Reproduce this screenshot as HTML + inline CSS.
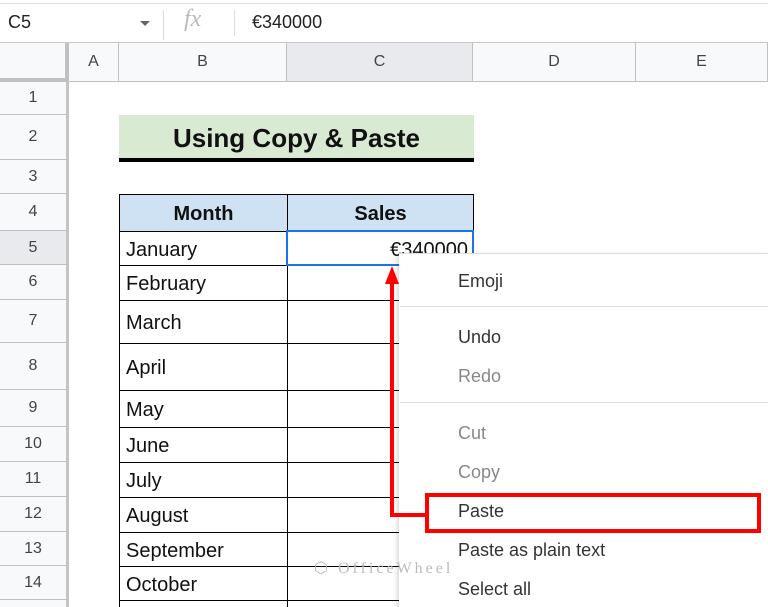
<!DOCTYPE html><html><head><style>
*{margin:0;padding:0;box-sizing:border-box}
html,body{width:768px;height:607px;overflow:hidden}
body{background:#fff;font-family:"Liberation Sans",Arial,sans-serif;position:relative}
.a{position:absolute}
.rh{position:absolute;left:0;width:69px;background:#f8f9fa;border-bottom:1px solid #c0c0c0;border-right:3px solid #c4c4c4;color:#444;font-size:16px;display:flex;align-items:center;justify-content:center}
.ch{position:absolute;top:43px;height:39px;background:#f8f9fa;border-right:1px solid #c0c0c0;border-bottom:1px solid #c0c0c0;color:#444;font-size:16px;display:flex;align-items:center;justify-content:center}
.cell{position:absolute;border:1px solid #000;font-size:20px;color:#111;display:flex;align-items:center;padding-left:6px;padding-top:3px}
.mi{position:absolute;left:458px;font-size:18px;color:#333}
.g{color:#888}
</style></head><body>
<div class="a" style="left:0;top:0;width:768px;height:4px;background:#fff;border-bottom:1px solid #ddd"></div>
<div class="a" style="left:8px;top:12px;font-size:18px;color:#222">C5</div>
<div class="a" style="left:140px;top:21px;width:0;height:0;border-left:5px solid transparent;border-right:5px solid transparent;border-top:5px solid #666"></div>
<div class="a" style="left:163px;top:10px;width:1px;height:30px;background:#ddd"></div>
<div class="a" style="left:184px;top:6px;font-size:24px;color:#bbb;font-family:'Liberation Serif',serif;font-style:italic">fx</div>
<div class="a" style="left:234px;top:10px;width:1px;height:26px;background:#ddd"></div>
<div class="a" style="left:252px;top:12px;font-size:18px;color:#222">€340000</div>
<div class="a" style="left:0;top:42px;width:768px;height:1px;background:#c8c8c8"></div>
<div class="a" style="left:0;top:43px;width:69px;height:39px;background:#f8f9fa;border-right:4px solid #c0c0c0;border-bottom:4px solid #c0c0c0"></div>
<div class="ch" style="left:69px;width:50px">A</div>
<div class="ch" style="left:119px;width:168px">B</div>
<div class="ch" style="left:287px;width:186px;background:#e8eaed">C</div>
<div class="ch" style="left:473px;width:163px">D</div>
<div class="ch" style="left:636px;width:132px">E</div>
<div class="rh" style="top:82px;height:33px">1</div>
<div class="rh" style="top:115px;height:45px">2</div>
<div class="rh" style="top:160px;height:34px">3</div>
<div class="rh" style="top:194px;height:37px">4</div>
<div class="rh" style="top:231px;height:34px;background:#e8eaed">5</div>
<div class="rh" style="top:265px;height:35px">6</div>
<div class="rh" style="top:300px;height:43px">7</div>
<div class="rh" style="top:343px;height:47px">8</div>
<div class="rh" style="top:390px;height:37px">9</div>
<div class="rh" style="top:427px;height:35px">10</div>
<div class="rh" style="top:462px;height:35px">11</div>
<div class="rh" style="top:497px;height:35px">12</div>
<div class="rh" style="top:532px;height:34px">13</div>
<div class="rh" style="top:566px;height:34px">14</div>
<div class="rh" style="top:600px;height:10px"></div>
<div class="a" style="left:119px;top:115px;width:355px;height:47px;background:#d9ead3;border-bottom:4px solid #000;font-weight:bold;font-size:26px;text-align:center;line-height:46px;color:#111">Using Copy &amp; Paste</div>
<div class="cell" style="left:119px;top:194px;width:169px;height:38px;background:#cfe2f3;justify-content:center;font-weight:bold;padding:3px 0 0">Month</div>
<div class="cell" style="left:287px;top:194px;width:187px;height:38px;background:#cfe2f3;justify-content:center;font-weight:bold;padding:3px 0 0">Sales</div>
<div class="cell" style="left:119px;top:231px;width:169px;height:35px">January</div>
<div class="cell" style="left:119px;top:265px;width:169px;height:36px">February</div>
<div class="cell" style="left:119px;top:300px;width:169px;height:44px">March</div>
<div class="cell" style="left:119px;top:343px;width:169px;height:48px">April</div>
<div class="cell" style="left:119px;top:390px;width:169px;height:38px">May</div>
<div class="cell" style="left:119px;top:427px;width:169px;height:36px">June</div>
<div class="cell" style="left:119px;top:462px;width:169px;height:36px">July</div>
<div class="cell" style="left:119px;top:497px;width:169px;height:36px">August</div>
<div class="cell" style="left:119px;top:532px;width:169px;height:35px">September</div>
<div class="cell" style="left:119px;top:566px;width:169px;height:35px">October</div>
<div class="cell" style="left:119px;top:600px;width:169px;height:20px"></div>
<div class="cell" style="left:287px;top:265px;width:187px;height:36px"></div>
<div class="cell" style="left:287px;top:300px;width:187px;height:44px"></div>
<div class="cell" style="left:287px;top:343px;width:187px;height:48px"></div>
<div class="cell" style="left:287px;top:390px;width:187px;height:38px"></div>
<div class="cell" style="left:287px;top:427px;width:187px;height:36px"></div>
<div class="cell" style="left:287px;top:462px;width:187px;height:36px"></div>
<div class="cell" style="left:287px;top:497px;width:187px;height:36px"></div>
<div class="cell" style="left:287px;top:532px;width:187px;height:35px"></div>
<div class="cell" style="left:287px;top:566px;width:187px;height:35px"></div>
<div class="cell" style="left:287px;top:600px;width:187px;height:20px"></div>
<div class="a" style="left:286px;top:230px;width:188px;height:36px;border:2px solid #1a73e8;background:#fff;font-size:20px;text-align:right;padding-right:4px;line-height:36px;color:#111">€340000</div>
<div class="a" style="left:399px;top:253px;width:369px;height:360px;background:#fff;border-top:1px solid #ddd;box-shadow:-2px 2px 4px rgba(0,0,0,0.15)"></div>
<div class="a" style="left:400px;top:306px;width:368px;height:1px;background:#ddd"></div>
<div class="a" style="left:400px;top:402px;width:368px;height:1px;background:#ddd"></div>
<div class="mi" style="top:271px">Emoji</div>
<div class="mi" style="top:327px">Undo</div>
<div class="mi g" style="top:366px">Redo</div>
<div class="mi g" style="top:423px">Cut</div>
<div class="mi g" style="top:462px">Copy</div>
<div class="mi" style="top:501px">Paste</div>
<div class="mi" style="top:540px">Paste as plain text</div>
<div class="mi" style="top:579px">Select all</div>
<div class="a" style="left:425px;top:493px;width:336px;height:40px;border:4px solid #f00"></div>
<div class="a" style="left:390px;top:283px;width:4px;height:234px;background:#f00"></div>
<div class="a" style="left:390px;top:513px;width:37px;height:4px;background:#f00"></div>
<div class="a" style="left:385px;top:266px;width:0;height:0;border-left:7px solid transparent;border-right:7px solid transparent;border-bottom:18px solid #f00"></div>
<div class="a" style="left:314px;top:558px;font-size:16px;color:#bbb;letter-spacing:3px;font-family:'Liberation Serif',serif">⬡ OfficeWheel</div>
</body></html>
